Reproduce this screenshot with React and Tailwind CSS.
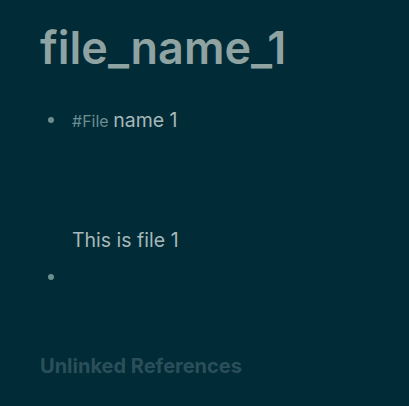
import React from "react";

const Bullet = () => (
  <span className="flex h-7 w-[22px] shrink-0 items-center justify-center">
    <span className="h-[6px] w-[6px] rounded-full bg-[#6b8e91]" />
  </span>
);

export default function App() {
  return (
    <div className="h-[406px] w-[409px] overflow-hidden bg-[#002b37] font-['Inter',sans-serif]">
      <div className="px-10 pt-[18px]">
        {/* 페이지 제목 */}
        <h1 className="text-[45px] font-semibold leading-[60px] text-[#8fa3a3]">
          file_name_1
        </h1>

        {/* 블록 목록 */}
        <div className="mt-[28px]">
          <div className="flex items-start">
            <Bullet />
            <div className="ml-[10px] leading-7 text-[#a7b8b9]">
              <span className="text-[16px] text-[#6b8e91]">#File</span>{" "}
              <span className="text-[19.5px]">name 1</span>
            </div>
          </div>
          <div className="ml-[32px] mt-[91px] text-[19.5px] leading-7 text-[#a7b8b9]">
            This is file 1
          </div>
          <div className="mt-[9px] flex items-start">
            <Bullet />
          </div>
        </div>

        <div className="mt-[60px] text-[20px] font-bold text-[#2b4f5a]">
          Unlinked References
        </div>
      </div>
    </div>
  );
}
